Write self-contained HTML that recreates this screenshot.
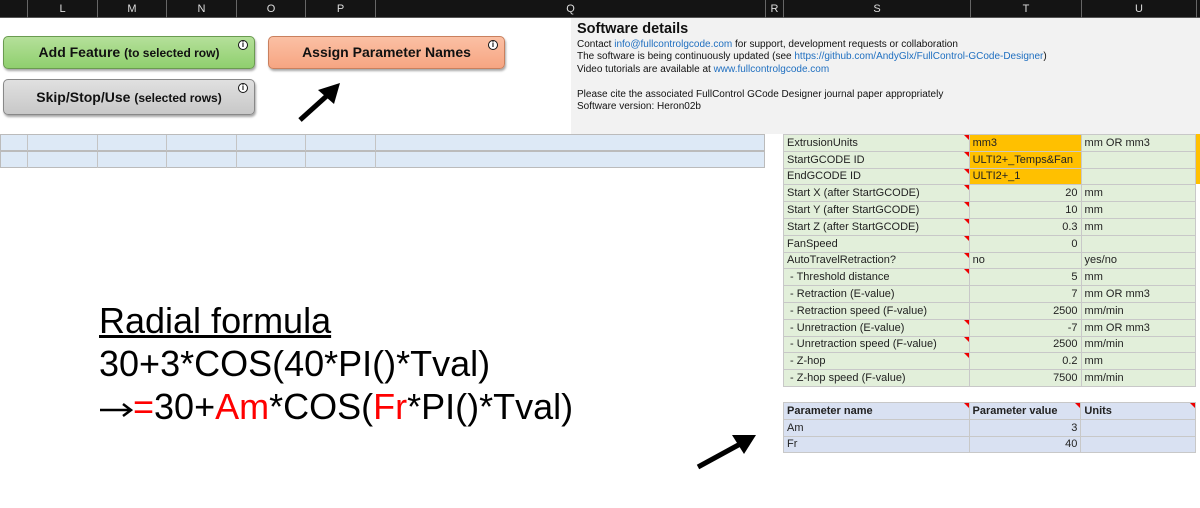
<!DOCTYPE html>
<html><head><meta charset="utf-8"><style>
*{margin:0;padding:0;box-sizing:border-box}
body{width:1200px;height:508px;background:#fff;position:relative;overflow:hidden;font-family:"Liberation Sans",sans-serif}
.hdr{position:absolute;left:0;top:0;width:1200px;height:18px;background:#141414;border-bottom:1px solid #555}
.hc{position:absolute;top:0;height:18px;color:#ddd;font-size:11px;line-height:18px;text-align:center;border-left:1px solid #666}
.btn{position:absolute;border-radius:5px;font-weight:bold;font-size:14px;text-align:center;color:#111;box-shadow:1px 2px 2px rgba(0,0,0,.35);font-family:"Liberation Sans Narrow","Liberation Sans",sans-serif}
.btn small{font-size:12px}
.info{position:absolute;right:6px;top:3px;width:10px;height:10px;border:1px solid #111;border-radius:50%;font-size:8px;line-height:8px;font-weight:bold;text-align:center;background:#fff}
.panel{position:absolute;left:571px;top:18px;width:629px;height:116px;background:#f2f2f2;font-size:10px;color:#111;padding:5px 6px;line-height:12.5px}
.panel a{color:#1f6fc0;text-decoration:none}
.blue{position:absolute;left:0;width:765px;height:17px;background:#dde9f6;border:1px solid #bbb}
.bc{position:absolute;top:0;height:16px;border-left:1px solid #c4c4c4}
table{position:absolute;border-collapse:collapse;font-size:11px;color:#222}
td{height:16.8px;border:1px solid #c8c8c8;padding:0 3px;white-space:nowrap;position:relative}
.g td{background:#e2efda}
.o{background:#ffc000!important}
.r{text-align:right}
.tri:after{content:"";position:absolute;right:0;top:0;border-top:5px solid #e00;border-left:5px solid transparent}
.f{position:absolute;left:99px;font-size:36px;color:#000;line-height:44px;white-space:nowrap}
.red{color:#f00}
</style></head><body>
<div class="hdr">
<div class="hc" style="left:27px;width:70px">L</div>
<div class="hc" style="left:97px;width:69px">M</div>
<div class="hc" style="left:166px;width:70px">N</div>
<div class="hc" style="left:236px;width:69px">O</div>
<div class="hc" style="left:305px;width:70px">P</div>
<div class="hc" style="left:375px;width:390px">Q</div>
<div class="hc" style="left:765px;width:18px">R</div>
<div class="hc" style="left:783px;width:187px">S</div>
<div class="hc" style="left:970px;width:111px">T</div>
<div class="hc" style="left:1081px;width:115px">U</div>
<div class="hc" style="left:1196px;width:4px"></div>
</div>
<div class="btn" style="left:3px;top:36px;width:252px;height:33px;line-height:31px;background:linear-gradient(#b5e09a,#8fcf6e);border:1px solid #6a9b50">Add Feature <small>(to selected row)</small><span class="info">i</span></div>
<div class="btn" style="left:268px;top:36px;width:237px;height:33px;line-height:31px;background:linear-gradient(#fbc0a4,#f6a582);border:1px solid #c9805e">Assign Parameter Names<span class="info">i</span></div>
<div class="btn" style="left:3px;top:79px;width:252px;height:36px;line-height:34px;background:linear-gradient(#e0e0e0,#c8c8c8);border:1px solid #888">Skip/Stop/Use <small>(selected rows)</small><span class="info">i</span></div>
<svg style="position:absolute;left:290px;top:78px" width="60" height="50"><line x1="10" y1="42" x2="40" y2="15" stroke="#000" stroke-width="5"/><polygon points="50,5 28,12 44,26" fill="#000"/></svg>
<svg style="position:absolute;left:690px;top:430px" width="70" height="45"><line x1="8" y1="37" x2="52" y2="13" stroke="#000" stroke-width="5"/><polygon points="66,5 42,5 54,24" fill="#000"/></svg>
<div class="panel"><div style="font-size:14.5px;font-weight:bold;margin-bottom:3px">Software details</div>
Contact <a>info@fullcontrolgcode.com</a> for support, development requests or collaboration<br>
The software is being continuously updated (see <a>https://github.com/AndyGlx/FullControl-GCode-Designer</a>)<br>
Video tutorials are available at <a>www.fullcontrolgcode.com</a><br><br>
Please cite the associated FullControl GCode Designer journal paper appropriately<br>
Software version: Heron02b</div>
<div class="blue" style="top:134px"><div class="bc" style="left:26px"></div><div class="bc" style="left:96px"></div><div class="bc" style="left:165px"></div><div class="bc" style="left:235px"></div><div class="bc" style="left:304px"></div><div class="bc" style="left:374px"></div></div>
<div class="blue" style="top:151px"><div class="bc" style="left:26px"></div><div class="bc" style="left:96px"></div><div class="bc" style="left:165px"></div><div class="bc" style="left:235px"></div><div class="bc" style="left:304px"></div><div class="bc" style="left:374px"></div></div>
<div style="position:absolute;left:1196px;top:134px;width:4px;height:50px;background:#ffc000"></div>
<table class="g" style="left:783px;top:134px;width:413px">
<col style="width:186px"><col style="width:112px"><col style="width:115px">
<tr><td class="tri">ExtrusionUnits</td><td class="o">mm3</td><td>mm OR mm3</td></tr>
<tr><td class="tri">StartGCODE ID</td><td class="o">ULTI2+_Temps&amp;Fan</td><td></td></tr>
<tr><td class="tri">EndGCODE ID</td><td class="o">ULTI2+_1</td><td></td></tr>
<tr><td class="tri">Start X (after StartGCODE)</td><td class="r">20</td><td>mm</td></tr>
<tr><td class="tri">Start Y (after StartGCODE)</td><td class="r">10</td><td>mm</td></tr>
<tr><td class="tri">Start Z (after StartGCODE)</td><td class="r">0.3</td><td>mm</td></tr>
<tr><td class="tri">FanSpeed</td><td class="r">0</td><td></td></tr>
<tr><td class="tri">AutoTravelRetraction?</td><td>no</td><td>yes/no</td></tr>
<tr><td class="tri">&nbsp;- Threshold distance</td><td class="r">5</td><td>mm</td></tr>
<tr><td>&nbsp;- Retraction (E-value)</td><td class="r">7</td><td>mm OR mm3</td></tr>
<tr><td>&nbsp;- Retraction speed (F-value)</td><td class="r">2500</td><td>mm/min</td></tr>
<tr><td class="tri">&nbsp;- Unretraction (E-value)</td><td class="r">-7</td><td>mm OR mm3</td></tr>
<tr><td class="tri">&nbsp;- Unretraction speed (F-value)</td><td class="r">2500</td><td>mm/min</td></tr>
<tr><td class="tri">&nbsp;- Z-hop</td><td class="r">0.2</td><td>mm</td></tr>
<tr><td>&nbsp;- Z-hop speed (F-value)</td><td class="r">7500</td><td>mm/min</td></tr>
</table>
<table style="left:783px;top:402px;width:413px;background:#d9e1f2">
<col style="width:186px"><col style="width:112px"><col style="width:115px">
<tr style="font-weight:bold"><td class="tri">Parameter name</td><td class="tri">Parameter value</td><td class="tri">Units</td></tr>
<tr><td>Am</td><td class="r">3</td><td></td></tr>
<tr><td>Fr</td><td class="r">40</td><td></td></tr>
</table>
<div class="f" style="top:299px;text-decoration:underline">Radial formula</div>
<div class="f" style="top:342px">30+3*COS(40*PI()*Tval)</div>
<div class="f" style="top:385px"><svg width="34" height="20" style="vertical-align:-1px"><line x1="1" y1="10" x2="31" y2="10" stroke="#000" stroke-width="2.5"/><path d="M24 4 L32 10 L24 16" fill="none" stroke="#000" stroke-width="2.5"/></svg><span class="red">=</span>30+<span class="red">Am</span>*COS(<span class="red">Fr</span>*PI()*Tval)</div>
</body></html>
